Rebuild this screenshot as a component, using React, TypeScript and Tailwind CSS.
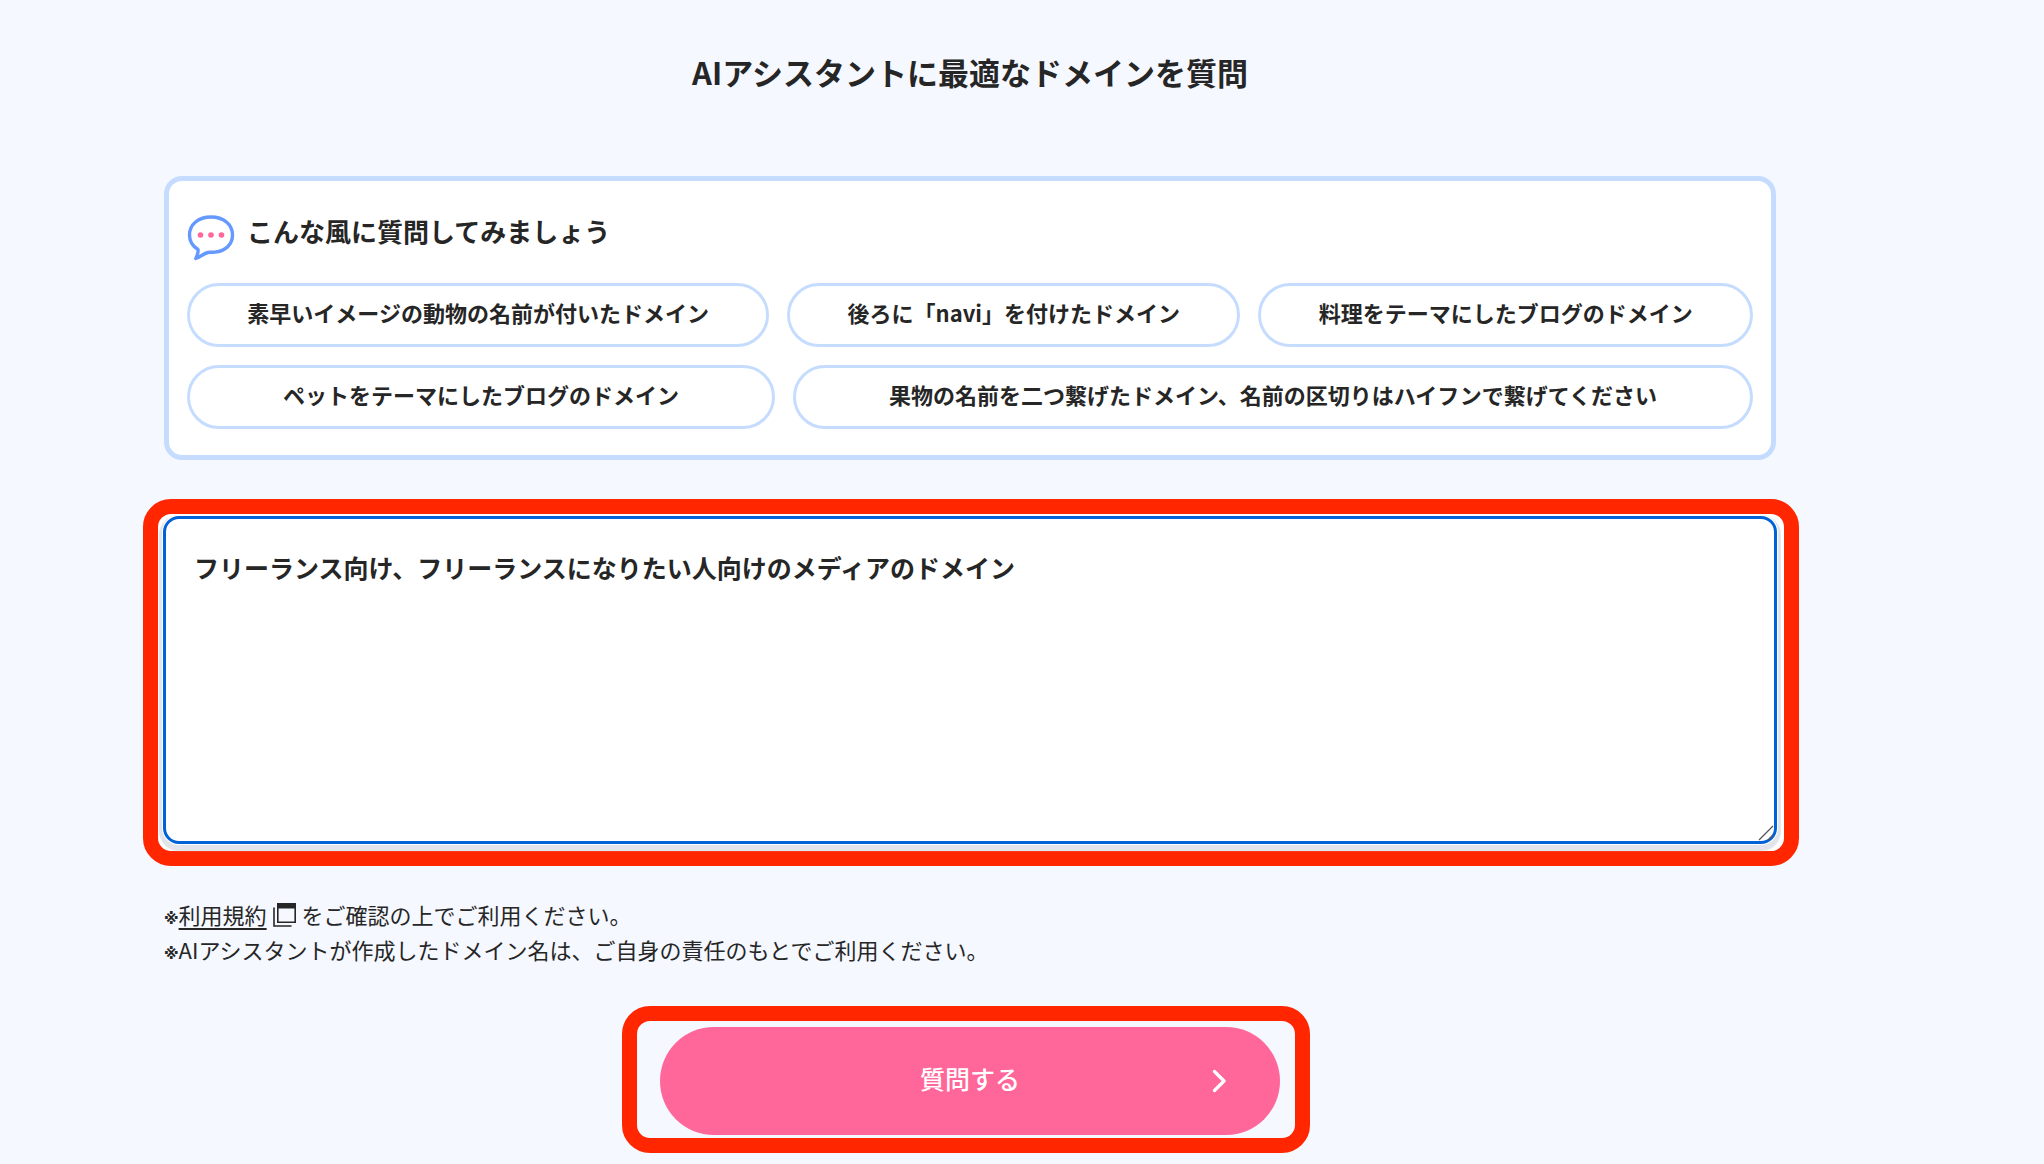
import React, { useState } from "react";

const suggestions = [
  "素早いイメージの動物の名前が付いたドメイン",
  "後ろに「navi」を付けたドメイン",
  "料理をテーマにしたブログのドメイン",
  "ペットをテーマにしたブログのドメイン",
  "果物の名前を二つ繋げたドメイン、名前の区切りはハイフンで繋げてください",
];

function BubbleIcon() {
  return (
    <svg viewBox="0 0 48 46" fill="none" className="mt-0.5 w-12 h-[46px] shrink-0" aria-hidden="true">
      <path
        d="M24 2C11.500 2 2.500 9.500 2.500 20c0 6.500 3.500 11.500 8.500 14.500.5 3-.5 5.500-2.200 9C13.500 42 16.500 38.500 21 37.500c2-.4 4 0 7-.4C38.500 36 45.500 29.500 45.500 20 45.500 9.500 36.500 2 24 2Z"
        stroke="#6699ff"
        strokeWidth="3.400"
        strokeLinejoin="round"
      />
      <circle cx="13.500" cy="20" r="2.800" fill="#ff6699" />
      <circle cx="24" cy="20" r="2.800" fill="#ff6699" />
      <circle cx="34.500" cy="20" r="2.800" fill="#ff6699" />
    </svg>
  );
}

function WindowIcon() {
  return (
    <svg viewBox="0 0 23 24" className="inline-block w-[23px] h-6 mx-1.5 align-[-3px]" aria-hidden="true">
      <path d="M1 4.500V23H18.500" fill="none" stroke="#262626" strokeWidth="1.600" />
      <path d="M4 0h19v20H4zM5.600 5.500v12.900h15.800V5.500z" fill="#262626" fillRule="evenodd" />
    </svg>
  );
}

function NoteMark() {
  return <span className="font-['DejaVu_Sans',sans-serif] text-[15px] leading-none font-bold">※</span>;
}

export default function App() {
  const [question, setQuestion] = useState("フリーランス向け、フリーランスになりたい人向けのメディアのドメイン");

  return (
    <div className="min-h-screen bg-[#f5f8ff] pr-[104px] text-[#262626] font-['Noto_Sans_CJK_JP',sans-serif]">
      <main lang="ja" className="mx-auto max-w-[1612px] pt-12 pb-[29px]">
        <h1 className="text-center text-[31px] leading-[48px] font-bold">AIアシスタントに最適なドメインを質問</h1>

        <section className="mt-20 rounded-[18px] border-5 border-[#c6dcff] bg-white px-[18px] pt-8 pb-[26px]">
          <h2 className="flex gap-3 text-[26px] leading-9 font-bold">
            <BubbleIcon />
            こんな風に質問してみましょう
          </h2>
          <div className="mt-[22px] flex flex-wrap gap-[18px]">
            {suggestions.map((text) => (
              <button
                key={text}
                type="button"
                onClick={() => setQuestion(text)}
                className="grow rounded-full border-3 border-[#c6dcff] bg-white px-12 h-16 pb-1.5 text-[22px] leading-8 font-bold"
              >
                {text}
              </button>
            ))}
          </div>
        </section>

        <div className="relative mt-14 -mx-px">
          <div className="absolute -left-5 -right-[22px] -top-[17px] -bottom-[22px] rounded-[28px] border-15 border-[#ff2600] bg-white pointer-events-none" />
          <textarea
            aria-label="質問内容"
            value={question}
            onChange={(e) => setQuestion(e.target.value)}
            className="relative block w-full h-[328px] resize-none rounded-2xl border-3 border-[#0062d6] bg-white px-7 py-[29px] text-[25px] leading-[38px] font-bold outline-none shadow-[0_0_0_1px_#ffffff,0_3px_1px_4px_#e2e4eb]"
          />
          <svg viewBox="0 0 16 16" className="absolute right-[3px] bottom-[3px] size-4 pointer-events-none" aria-hidden="true">
            <path d="M1 15 15 1M10 15l5-5" stroke="#555" strokeWidth="1.300" fill="none" />
          </svg>
        </div>

        <div className="mt-[53px] text-[22px] leading-[35px]">
          <p>
            <NoteMark />
            <a href="#terms" className="underline underline-offset-4 decoration-2">利用規約</a>
            <WindowIcon />
            をご確認の上でご利用ください。
          </p>
          <p>
            <NoteMark />
            AIアシスタントが作成したドメイン名は、ご自身の責任のもとでご利用ください。
          </p>
        </div>

        <div className="relative mx-auto mt-[60px] max-w-[620px]">
          <button type="button" className="relative block w-full h-[108px] rounded-full bg-[#ff6699] pb-1 text-[25px] font-medium text-white">
            質問する
            <svg viewBox="0 0 14 24" fill="none" className="absolute right-[54px] top-[42px] w-3.5 h-6" aria-hidden="true">
              <path d="M2.500 2.500 12 12l-9.500 9.500" stroke="white" strokeWidth="3.200" strokeLinecap="round" strokeLinejoin="round" />
            </svg>
          </button>
          <div className="absolute -left-[38px] -right-[30px] -top-[21px] -bottom-[18px] rounded-[28px] border-15 border-[#ff2600] pointer-events-none" />
        </div>
      </main>
    </div>
  );
}
